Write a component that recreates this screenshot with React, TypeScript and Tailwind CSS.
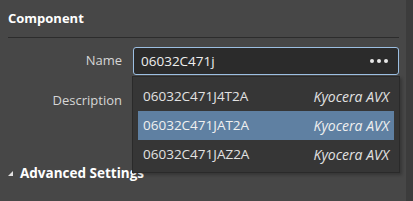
export default function App() {
  const rows = [
    { part: "06032C471J4T2A", maker: "Kyocera AVX", active: false },
    { part: "06032C471JAT2A", maker: "Kyocera AVX", active: true },
    { part: "06032C471JAZ2A", maker: "Kyocera AVX", active: false },
  ];

  return (
    <div className="relative flex h-[201px] w-[413px] overflow-hidden bg-[#474747] font-['Open_Sans','Noto_Sans',sans-serif] text-[13px]">
      <div className="flex flex-1 flex-col pl-[8px] pr-[7px]">
        {/* Header */}
        <div className="flex h-[38px] items-center border-b border-[#2c2c2c] text-[13px] font-bold text-white">
          Component
        </div>

        {/* Name */}
        <div className="mt-[9px] flex h-[28px] items-center">
          <div className="w-[115px] pr-[1px] text-right text-[#d6d6d6]">Name</div>
          <div className="ml-[10px] flex h-[28px] flex-1 items-center rounded-[3px] border border-[#9cbfe2] bg-[#2b2b2b] pl-[7px] pr-[10px]">
            <span className="flex-1 text-[13.5px] text-[#eeeeee]">06032C471j</span>
            <svg width="18" height="4" viewBox="0 0 18 4" className="fill-[#e8e8e8]">
              <circle cx="2" cy="2" r="2" />
              <circle cx="9" cy="2" r="2" />
              <circle cx="16" cy="2" r="2" />
            </svg>
          </div>
        </div>

        {/* Description */}
        <div className="mt-[12px] flex h-[28px] items-center">
          <div className="w-[115px] pr-[1px] text-right text-[#d6d6d6]">Description</div>
        </div>

        {/* Advanced */}
        <div className="mt-[48px] flex items-center gap-[7px]">
          <svg width="5" height="5" viewBox="0 0 5 5" className="fill-[#e0e0e0]">
            <polygon points="5,0 5,5 0,5" />
          </svg>
          <span className="text-[13.5px] font-bold text-white">Advanced Settings</span>
        </div>
      </div>
      <div className="w-[7px] bg-[#3c3c3c]" />

      {/* Dropdown */}
      <div className="absolute left-[132px] top-[76px] flex w-[268px] flex-col border border-[#2a2a2a] bg-[#363636] px-[5px] pb-[3px] pt-[5px] shadow-[2px_2px_3px_rgba(0,0,0,0.25)]">
        {rows.map((r) => (
          <div
            key={r.part}
            className={`flex h-[29px] items-center justify-between px-[5px] ${
              r.active ? "bg-[#5f80a2] text-[#f0f0f0]" : "text-[#e2e2e2]"
            }`}
          >
            <span className="text-[13.5px]">{r.part}</span>
            <span className="text-[14px] italic">{r.maker}</span>
          </div>
        ))}
      </div>
    </div>
  );
}
